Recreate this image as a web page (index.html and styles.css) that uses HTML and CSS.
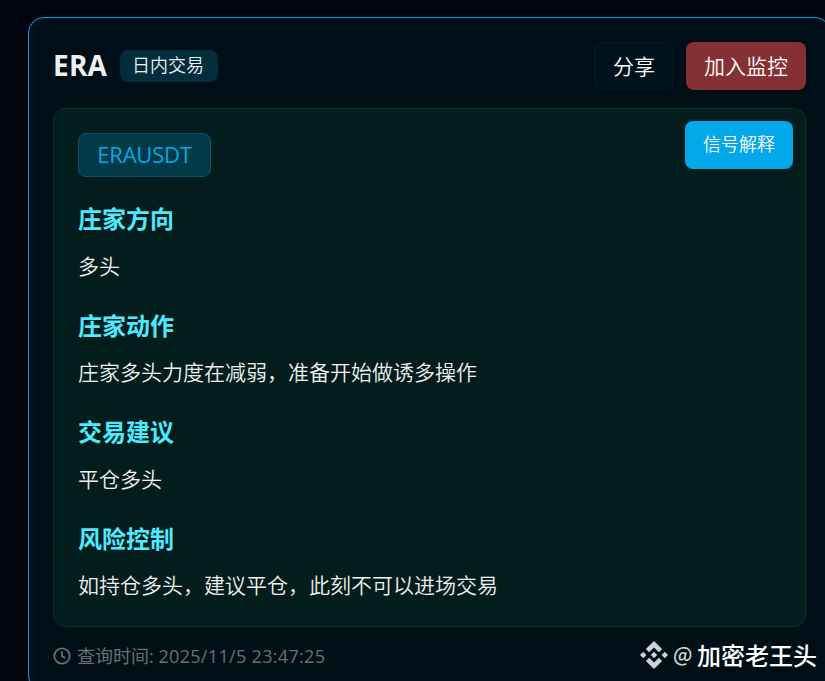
FILE: index.html
```html
<!DOCTYPE html>
<html lang="zh-CN">
<head>
    <meta charset="UTF-8">
    <meta name="viewport" content="width=device-width, initial-scale=1.0">
    <title>ERA 日内交易</title>
    <link rel="stylesheet" href="styles.css">
</head>
<body>
    <div class="card">
        <header class="card-header">
            <div class="title-group">
                <h1 class="coin">ERA</h1>
                <span class="badge">日内交易</span>
            </div>
            <div class="actions">
                <button class="btn btn-share">分享</button>
                <button class="btn btn-monitor">加入监控</button>
            </div>
        </header>

        <main class="panel">
            <button class="btn btn-explain">信号解释</button>
            <div class="symbol">ERAUSDT</div>
            <div class="sections">
                <section class="section">
                    <h2>庄家方向</h2>
                    <p>多头</p>
                </section>
                <section class="section">
                    <h2>庄家动作</h2>
                    <p>庄家多头力度在减弱，准备开始做诱多操作</p>
                </section>
                <section class="section">
                    <h2>交易建议</h2>
                    <p>平仓多头</p>
                </section>
                <section class="section">
                    <h2>风险控制</h2>
                    <p>如持仓多头，建议平仓，此刻不可以进场交易</p>
                </section>
            </div>
        </main>

        <footer class="query-time">
            <svg class="clock" viewBox="0 0 18 18" fill="none" stroke="currentColor" stroke-width="1.8">
                <circle cx="9" cy="9" r="7.7"/>
                <path d="M9 4.3V9.3L12.3 11"/>
            </svg>
            <span class="query-text">查询时间: <span class="stamp">2025/11/5 23:47:25</span></span>
        </footer>
    </div>

    <div class="watermark">
        <svg class="logo" viewBox="0 0 28 28" fill="currentColor">
            <path d="M14 0L22.1 8.1L18.9 11.3L14 6.4L9.1 11.3L5.9 8.1Z"/>
            <path d="M14 28L22.1 19.9L18.9 16.7L14 21.6L9.1 16.7L5.9 19.9Z"/>
            <path d="M14 10.8L17.2 14L14 17.2L10.8 14Z"/>
            <path d="M3.2 10.8L6.4 14L3.2 17.2L0 14Z"/>
            <path d="M24.8 10.8L28 14L24.8 17.2L21.6 14Z"/>
        </svg>
        <span class="at">@</span>
        <span class="author">加密老王头</span>
    </div>
</body>
</html>
```
FILE: styles.css
```css
* {
    box-sizing: border-box;
    margin: 0;
    padding: 0;
}

body {
    height: 100vh;
    padding: 17px 0 0 28px;
    overflow: hidden;
    position: relative;
    background-color: #01050d;
    color: #f0f0f0;
    font-family: "Open Sans", "Noto Sans CJK SC", sans-serif;
}

.card {
    width: 803px;
    height: 675px;
    padding: 24px;
    border: 1px solid #03a3e0;
    border-radius: 16px;
    background-color: #000f17;
}

.card-header {
    display: flex;
    justify-content: space-between;
    align-items: center;
    height: 48px;
    margin-bottom: 18px;
}

.title-group,
.actions {
    display: flex;
    align-items: center;
    gap: 12px;
}

.coin {
    width: 55px;
    font-size: 28px;
    font-weight: 700;
    line-height: 46px;
    height: 48px;
    letter-spacing: 0.2px;
}

.badge {
    height: 32px;
    padding: 0 14px 0 12px;
    border-radius: 8px;
    background-color: #012d3c;
    font-size: 18px;
    font-weight: 350;
    line-height: 31px;
}

.btn {
    height: 48px;
    border: none;
    border-radius: 8px;
    color: #fff;
    font-family: inherit;
    font-size: 21px;
    font-weight: 350;
    line-height: 46px;
    text-align: center;
}

.btn-share {
    width: 80px;
    border: 1px solid #011a2a;
    background-color: #00121d;
}

.btn-monitor {
    width: 120px;
    background-color: #853032;
}

.panel {
    position: relative;
    height: 519px;
    padding: 24px;
    border: 1px solid #053324;
    border-radius: 12px;
    background-color: #031d1c;
}

/* 固定在面板右上角 */
.btn-explain {
    position: absolute;
    top: 12px;
    right: 12px;
    width: 108px;
    padding-bottom: 2px;
    background-color: #02a8e8;
    font-size: 18px;
}

.symbol {
    width: 133px;
    height: 44px;
    margin-bottom: 24px;
    border: 1px solid #13516b;
    border-radius: 8px;
    background-color: #023a47;
    color: #03a9ea;
    font-size: 22px;
    line-height: 41px;
    letter-spacing: -0.2px;
    text-align: center;
}

.sections {
    display: flex;
    flex-direction: column;
    gap: 25.5px;
}

.section h2 {
    margin-bottom: 13.5px;
    color: #4deaff;
    font-size: 24px;
    font-weight: 700;
    line-height: 36px;
}

.section p {
    font-size: 21px;
    font-weight: 350;
    line-height: 31.5px;
}

.query-time {
    display: flex;
    align-items: center;
    gap: 6px;
    height: 28px;
    margin-top: 15px;
    color: #6b6f70;
    font-size: 18px;
    white-space: nowrap;
}

.query-text {
    padding-bottom: 2px;
}

.stamp {
    letter-spacing: 0.32px;
}

.clock {
    width: 18px;
    height: 18px;
}

.watermark {
    position: absolute;
    right: 8px;
    bottom: 9px;
    display: flex;
    align-items: center;
    height: 34px;
    color: #fff;
    font-family: "Noto Sans CJK SC", sans-serif;
    font-size: 24px;
    font-weight: 500;
    line-height: 34px;
}

.logo {
    width: 28px;
    height: 28px;
    margin-right: 5px;
    color: #d0d3d5;
}

.at {
    width: 24px;
    height: 36px;
    color: #d0d3d5;
    font-size: 20px;
    font-weight: 500;
}
```
